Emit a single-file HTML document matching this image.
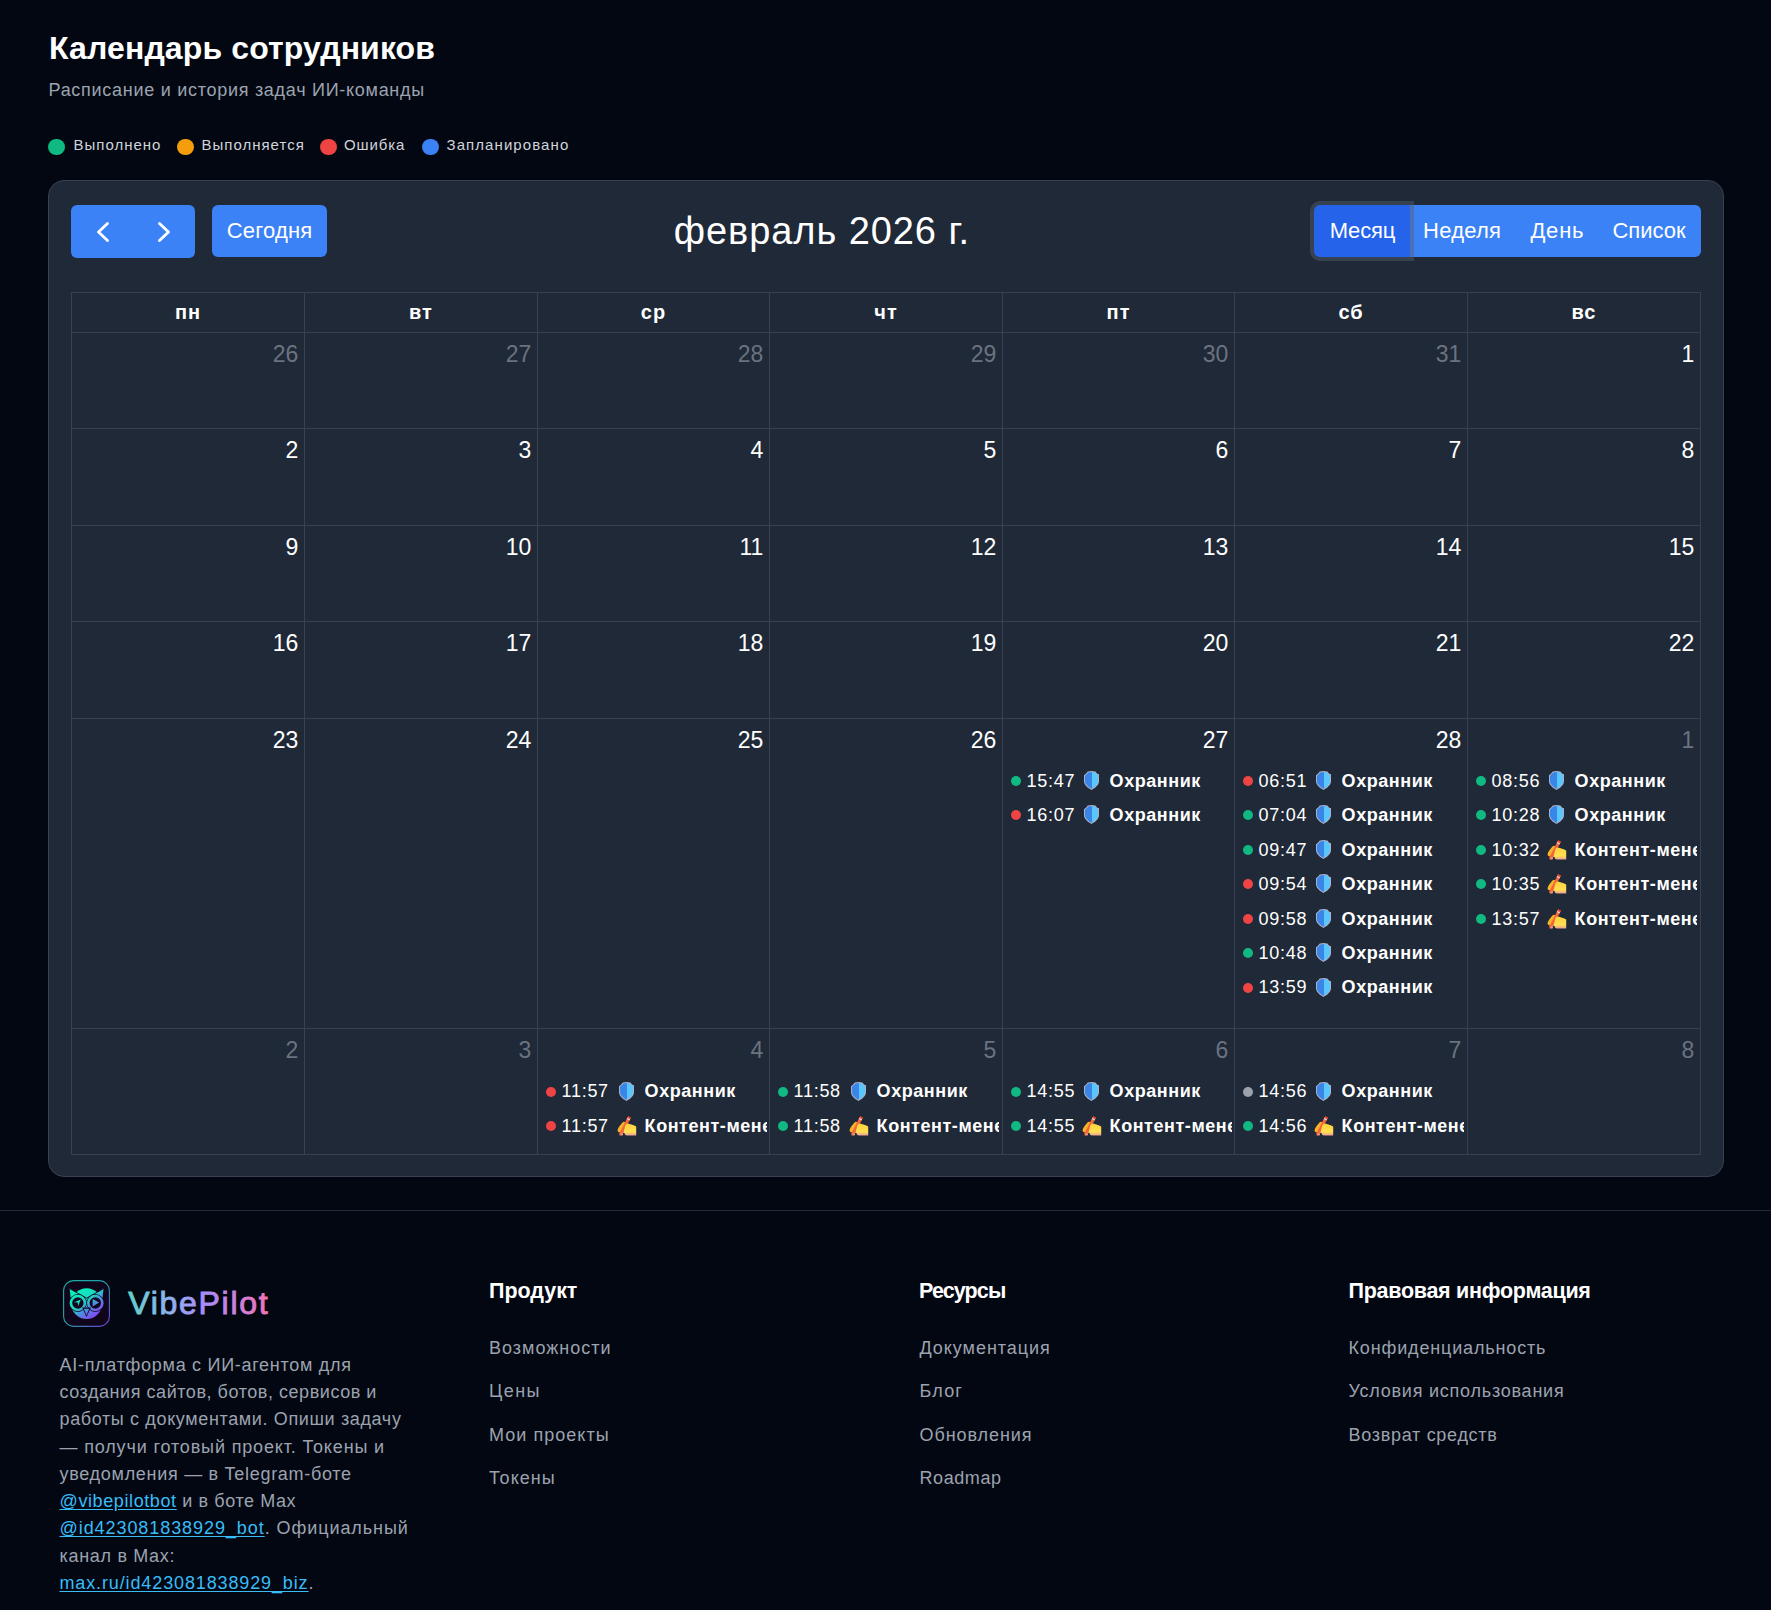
<!DOCTYPE html>
<html lang="ru"><head><meta charset="utf-8"><title>Календарь сотрудников</title>
<style>*{margin:0;padding:0;box-sizing:border-box}
html,body{width:1771px;height:1610px;overflow:hidden;background:#030712;font-family:"Liberation Sans", sans-serif;color:#fff}
.a{position:absolute}
.t{position:absolute;line-height:1;white-space:nowrap}
.ld{position:absolute;top:138.8px;width:16.6px;height:16.4px;border-radius:50%}
.card{position:absolute;left:48px;top:180px;width:1676px;height:997px;background:#1f2937;border:1px solid #374151;border-radius:16px}
.btn{position:absolute;background:#3b82f6;border-radius:6px}
.hl{position:absolute;height:1px;background:#374151}
.vl{position:absolute;width:1px;background:#374151}
.evc{position:absolute;overflow:hidden}
.dot{position:absolute;width:10px;height:10px;border-radius:50%}
.fline{position:absolute;left:0;top:1210px;width:1771px;height:1px;background:#1f2937}
a{color:#38bdf8;text-decoration:underline;text-underline-offset:2px}
</style></head>
<body>
<svg width="0" height="0" style="position:absolute">
<defs>
<linearGradient id="shg" gradientUnits="userSpaceOnUse" x1="0" y1="0" x2="15" y2="0"><stop offset="0.527" stop-color="#3a86e8"/><stop offset="0.527" stop-color="#59c6fc"/></linearGradient>
<linearGradient id="plm" x1="0" y1="0" x2="0" y2="1"><stop offset="0" stop-color="#fcd23c"/><stop offset="0.7" stop-color="#ffe052"/><stop offset="1" stop-color="#e99a9a"/></linearGradient>
<g id="shd">
<path d="M3.8 0.4 Q7.6 -0.3 11.4 0.4 L13.3 2.7 L15 3.3 L15 10 C15 13.8 11.6 16.9 7.5 18.9 C3.4 16.9 0 13.8 0 10 L0 4.2 L1.6 2.9 Z" fill="#a9b1cc"/>
<path d="M4.3 1.4 Q7.6 0.8 10.9 1.4 L12.6 3.5 L14 4.1 L14 10 C14 13.2 11.1 15.9 7.5 17.7 C3.9 15.9 1 13.2 1 10 L1 4.7 L2.3 3.6 Z" fill="url(#shg)"/>
</g>
<g id="hnd">
<path d="M0.6 14.8 C0.3 13.5 1.5 11.5 3 9.5 L5.5 6.5 C6.3 5.6 7.6 5.6 8.2 6.4 L8.6 8 L5.2 15.5 C4.2 17 1 16.8 0.6 14.8 Z" fill="#f7b42a"/>
<path d="M11.1 0.3 L13.9 1.8 L5.2 18.8 L2.5 19.6 L2.4 17.3 Z" fill="#f7653a"/>
<path d="M11.1 0.3 L13.9 1.8 L13.1 3.4 L10.3 1.9 Z" fill="#f24a2a"/>
<path d="M10.3 1.9 L13.1 3.4 L12.5 4.5 L9.7 3 Z" fill="#ded2f2"/>
<path d="M10 7.6 C12.5 7.8 16 9 19.2 10.5 L19.2 19.6 L10 19.6 C8.5 19.4 7.5 18.5 7.8 17.2 L6.2 17 L7.6 12.6 C8 10 8.6 8.2 10 7.6 Z" fill="url(#plm)"/>
<path d="M3 19.6 L4.4 17.2 L6.2 17.6 L5.6 19.6 Z" fill="#f19a8a"/>
</g>
</defs></svg><div class="t" style="left:49.00px;top:32.21px;font-size:32px;font-weight:700;letter-spacing:0.125px;">Календарь сотрудников</div>
<div class="t" style="left:48.50px;top:80.66px;font-size:18px;color:#9ca3af;letter-spacing:0.722px;">Расписание и история задач ИИ-команды</div>
<i class="ld" style="left:48px;background:#10b981"></i>
<div class="t" style="left:73.50px;top:136.90px;font-size:15px;color:#d1d5db;letter-spacing:1.000px;">Выполнено</div>
<i class="ld" style="left:177px;background:#f59e0b"></i>
<div class="t" style="left:201.50px;top:136.90px;font-size:15px;color:#d1d5db;letter-spacing:1.000px;">Выполняется</div>
<i class="ld" style="left:320px;background:#ef4444"></i>
<div class="t" style="left:344.00px;top:136.90px;font-size:15px;color:#d1d5db;letter-spacing:0.900px;">Ошибка</div>
<i class="ld" style="left:422px;background:#3b82f6"></i>
<div class="t" style="left:446.50px;top:136.90px;font-size:15px;color:#d1d5db;letter-spacing:1.083px;">Запланировано</div>
<div class="card"></div>
<div class="btn" style="left:71px;top:205px;width:124px;height:53px"></div>
<svg class="a" style="left:95px;top:220px" width="16" height="24" viewBox="0 0 16 24"><path d="M12.5 3.5 L3.5 12 L12.5 20.5" fill="none" stroke="#fff" stroke-width="2.8" stroke-linecap="round" stroke-linejoin="round"/></svg>
<svg class="a" style="left:156.2px;top:220px" width="16" height="24" viewBox="0 0 16 24"><path d="M3.5 3.5 L12.5 12 L3.5 20.5" fill="none" stroke="#fff" stroke-width="2.8" stroke-linecap="round" stroke-linejoin="round"/></svg>
<div class="btn" style="left:212px;top:205px;width:115px;height:52px"></div>
<div class="t" style="left:212.00px;top:220.38px;font-size:22px;letter-spacing:0.200px;width:115px;text-align:center;text-indent:0.200px;">Сегодня</div>
<div class="t" style="left:571.50px;top:211.93px;font-size:38px;letter-spacing:0.929px;width:500px;text-align:center;text-indent:0.929px;">февраль 2026 г.</div>
<div class="btn" style="left:1314px;top:205px;width:387px;height:52px"></div>
<div class="a" style="left:1310px;top:201px;width:104px;height:60px;background:#36424f;border-radius:10px 0 0 10px"></div>
<div class="btn" style="left:1314px;top:205px;width:96.3px;height:52px;background:#2563eb;border-radius:6px 0 0 6px"></div>
<div class="a" style="left:1410.3px;top:205px;width:3.9px;height:52px;background:#4a70b5"></div>
<div class="t" style="left:1314.00px;top:219.88px;font-size:22px;letter-spacing:-0.175px;width:97px;text-align:center;text-indent:-0.175px;">Месяц</div>
<div class="t" style="left:1414.00px;top:220.08px;font-size:22px;letter-spacing:0.240px;width:96px;text-align:center;text-indent:0.240px;">Неделя</div>
<div class="t" style="left:1511.00px;top:220.08px;font-size:22px;letter-spacing:0.800px;width:92px;text-align:center;text-indent:0.800px;">День</div>
<div class="t" style="left:1601.00px;top:220.08px;font-size:22px;width:96px;text-align:center;">Список</div>
<div class="hl" style="left:71px;top:292px;width:1630px"></div>
<div class="hl" style="left:71px;top:332px;width:1630px"></div>
<div class="hl" style="left:71px;top:428px;width:1630px"></div>
<div class="hl" style="left:71px;top:525px;width:1630px"></div>
<div class="hl" style="left:71px;top:621px;width:1630px"></div>
<div class="hl" style="left:71px;top:718px;width:1630px"></div>
<div class="hl" style="left:71px;top:1028px;width:1630px"></div>
<div class="hl" style="left:71px;top:1154px;width:1630px"></div>
<div class="vl" style="left:71px;top:292px;height:863px"></div>
<div class="vl" style="left:304px;top:292px;height:863px"></div>
<div class="vl" style="left:537px;top:292px;height:863px"></div>
<div class="vl" style="left:769px;top:292px;height:863px"></div>
<div class="vl" style="left:1002px;top:292px;height:863px"></div>
<div class="vl" style="left:1234px;top:292px;height:863px"></div>
<div class="vl" style="left:1467px;top:292px;height:863px"></div>
<div class="vl" style="left:1700px;top:292px;height:863px"></div>
<div class="t" style="left:127.50px;top:302.47px;font-size:20px;font-weight:700;letter-spacing:1.000px;width:120px;text-align:center;text-indent:1.000px;">пн</div>
<div class="t" style="left:360.50px;top:302.47px;font-size:20px;font-weight:700;letter-spacing:1.000px;width:120px;text-align:center;text-indent:1.000px;">вт</div>
<div class="t" style="left:593.00px;top:302.47px;font-size:20px;font-weight:700;letter-spacing:1.000px;width:120px;text-align:center;text-indent:1.000px;">ср</div>
<div class="t" style="left:825.50px;top:302.47px;font-size:20px;font-weight:700;letter-spacing:1.000px;width:120px;text-align:center;text-indent:1.000px;">чт</div>
<div class="t" style="left:1058.00px;top:302.47px;font-size:20px;font-weight:700;letter-spacing:1.000px;width:120px;text-align:center;text-indent:1.000px;">пт</div>
<div class="t" style="left:1290.50px;top:302.47px;font-size:20px;font-weight:700;letter-spacing:1.000px;width:120px;text-align:center;text-indent:1.000px;">сб</div>
<div class="t" style="left:1523.50px;top:302.47px;font-size:20px;font-weight:700;letter-spacing:1.000px;width:120px;text-align:center;text-indent:1.000px;">вс</div>
<div class="t" style="left:148.30px;top:343.13px;font-size:23px;color:#6b7280;width:150px;text-align:right;">26</div>
<div class="t" style="left:381.30px;top:343.13px;font-size:23px;color:#6b7280;width:150px;text-align:right;">27</div>
<div class="t" style="left:613.30px;top:343.13px;font-size:23px;color:#6b7280;width:150px;text-align:right;">28</div>
<div class="t" style="left:846.30px;top:343.13px;font-size:23px;color:#6b7280;width:150px;text-align:right;">29</div>
<div class="t" style="left:1078.30px;top:343.13px;font-size:23px;color:#6b7280;width:150px;text-align:right;">30</div>
<div class="t" style="left:1311.30px;top:343.13px;font-size:23px;color:#6b7280;width:150px;text-align:right;">31</div>
<div class="t" style="left:1544.30px;top:343.13px;font-size:23px;width:150px;text-align:right;">1</div>
<div class="t" style="left:148.30px;top:439.13px;font-size:23px;width:150px;text-align:right;">2</div>
<div class="t" style="left:381.30px;top:439.13px;font-size:23px;width:150px;text-align:right;">3</div>
<div class="t" style="left:613.30px;top:439.13px;font-size:23px;width:150px;text-align:right;">4</div>
<div class="t" style="left:846.30px;top:439.13px;font-size:23px;width:150px;text-align:right;">5</div>
<div class="t" style="left:1078.30px;top:439.13px;font-size:23px;width:150px;text-align:right;">6</div>
<div class="t" style="left:1311.30px;top:439.13px;font-size:23px;width:150px;text-align:right;">7</div>
<div class="t" style="left:1544.30px;top:439.13px;font-size:23px;width:150px;text-align:right;">8</div>
<div class="t" style="left:148.30px;top:536.13px;font-size:23px;width:150px;text-align:right;">9</div>
<div class="t" style="left:381.30px;top:536.13px;font-size:23px;width:150px;text-align:right;">10</div>
<div class="t" style="left:613.30px;top:536.13px;font-size:23px;width:150px;text-align:right;">11</div>
<div class="t" style="left:846.30px;top:536.13px;font-size:23px;width:150px;text-align:right;">12</div>
<div class="t" style="left:1078.30px;top:536.13px;font-size:23px;width:150px;text-align:right;">13</div>
<div class="t" style="left:1311.30px;top:536.13px;font-size:23px;width:150px;text-align:right;">14</div>
<div class="t" style="left:1544.30px;top:536.13px;font-size:23px;width:150px;text-align:right;">15</div>
<div class="t" style="left:148.30px;top:632.13px;font-size:23px;width:150px;text-align:right;">16</div>
<div class="t" style="left:381.30px;top:632.13px;font-size:23px;width:150px;text-align:right;">17</div>
<div class="t" style="left:613.30px;top:632.13px;font-size:23px;width:150px;text-align:right;">18</div>
<div class="t" style="left:846.30px;top:632.13px;font-size:23px;width:150px;text-align:right;">19</div>
<div class="t" style="left:1078.30px;top:632.13px;font-size:23px;width:150px;text-align:right;">20</div>
<div class="t" style="left:1311.30px;top:632.13px;font-size:23px;width:150px;text-align:right;">21</div>
<div class="t" style="left:1544.30px;top:632.13px;font-size:23px;width:150px;text-align:right;">22</div>
<div class="t" style="left:148.30px;top:729.13px;font-size:23px;width:150px;text-align:right;">23</div>
<div class="t" style="left:381.30px;top:729.13px;font-size:23px;width:150px;text-align:right;">24</div>
<div class="t" style="left:613.30px;top:729.13px;font-size:23px;width:150px;text-align:right;">25</div>
<div class="t" style="left:846.30px;top:729.13px;font-size:23px;width:150px;text-align:right;">26</div>
<div class="t" style="left:1078.30px;top:729.13px;font-size:23px;width:150px;text-align:right;">27</div>
<div class="evc" style="left:1003px;top:719px;width:229px;height:309px">
<i class="dot" style="left:8.00px;top:57.00px;background:#10b981"></i>
<div class="t" style="left:23.60px;top:52.76px;font-size:18px;letter-spacing:0.700px;">15:47</div>
<svg class="a" style="left:81.00px;top:52.00px" width="15" height="19" viewBox="0 0 15 19"><use href="#shd"/></svg>
<div class="t" style="left:106.60px;top:52.76px;font-size:18px;font-weight:700;letter-spacing:0.557px;">Охранник</div>
<i class="dot" style="left:8.00px;top:91.45px;background:#ef4444"></i>
<div class="t" style="left:23.60px;top:87.21px;font-size:18px;letter-spacing:0.700px;">16:07</div>
<svg class="a" style="left:81.00px;top:86.45px" width="15" height="19" viewBox="0 0 15 19"><use href="#shd"/></svg>
<div class="t" style="left:106.60px;top:87.21px;font-size:18px;font-weight:700;letter-spacing:0.557px;">Охранник</div>
</div>
<div class="t" style="left:1311.30px;top:729.13px;font-size:23px;width:150px;text-align:right;">28</div>
<div class="evc" style="left:1235px;top:719px;width:229px;height:309px">
<i class="dot" style="left:8.00px;top:57.00px;background:#ef4444"></i>
<div class="t" style="left:23.60px;top:52.76px;font-size:18px;letter-spacing:0.700px;">06:51</div>
<svg class="a" style="left:81.00px;top:52.00px" width="15" height="19" viewBox="0 0 15 19"><use href="#shd"/></svg>
<div class="t" style="left:106.60px;top:52.76px;font-size:18px;font-weight:700;letter-spacing:0.557px;">Охранник</div>
<i class="dot" style="left:8.00px;top:91.45px;background:#10b981"></i>
<div class="t" style="left:23.60px;top:87.21px;font-size:18px;letter-spacing:0.700px;">07:04</div>
<svg class="a" style="left:81.00px;top:86.45px" width="15" height="19" viewBox="0 0 15 19"><use href="#shd"/></svg>
<div class="t" style="left:106.60px;top:87.21px;font-size:18px;font-weight:700;letter-spacing:0.557px;">Охранник</div>
<i class="dot" style="left:8.00px;top:125.90px;background:#10b981"></i>
<div class="t" style="left:23.60px;top:121.66px;font-size:18px;letter-spacing:0.700px;">09:47</div>
<svg class="a" style="left:81.00px;top:120.90px" width="15" height="19" viewBox="0 0 15 19"><use href="#shd"/></svg>
<div class="t" style="left:106.60px;top:121.66px;font-size:18px;font-weight:700;letter-spacing:0.557px;">Охранник</div>
<i class="dot" style="left:8.00px;top:160.35px;background:#ef4444"></i>
<div class="t" style="left:23.60px;top:156.11px;font-size:18px;letter-spacing:0.700px;">09:54</div>
<svg class="a" style="left:81.00px;top:155.35px" width="15" height="19" viewBox="0 0 15 19"><use href="#shd"/></svg>
<div class="t" style="left:106.60px;top:156.11px;font-size:18px;font-weight:700;letter-spacing:0.557px;">Охранник</div>
<i class="dot" style="left:8.00px;top:194.80px;background:#ef4444"></i>
<div class="t" style="left:23.60px;top:190.56px;font-size:18px;letter-spacing:0.700px;">09:58</div>
<svg class="a" style="left:81.00px;top:189.80px" width="15" height="19" viewBox="0 0 15 19"><use href="#shd"/></svg>
<div class="t" style="left:106.60px;top:190.56px;font-size:18px;font-weight:700;letter-spacing:0.557px;">Охранник</div>
<i class="dot" style="left:8.00px;top:229.25px;background:#10b981"></i>
<div class="t" style="left:23.60px;top:225.01px;font-size:18px;letter-spacing:0.700px;">10:48</div>
<svg class="a" style="left:81.00px;top:224.25px" width="15" height="19" viewBox="0 0 15 19"><use href="#shd"/></svg>
<div class="t" style="left:106.60px;top:225.01px;font-size:18px;font-weight:700;letter-spacing:0.557px;">Охранник</div>
<i class="dot" style="left:8.00px;top:263.70px;background:#ef4444"></i>
<div class="t" style="left:23.60px;top:259.46px;font-size:18px;letter-spacing:0.700px;">13:59</div>
<svg class="a" style="left:81.00px;top:258.70px" width="15" height="19" viewBox="0 0 15 19"><use href="#shd"/></svg>
<div class="t" style="left:106.60px;top:259.46px;font-size:18px;font-weight:700;letter-spacing:0.557px;">Охранник</div>
</div>
<div class="t" style="left:1544.30px;top:729.13px;font-size:23px;color:#6b7280;width:150px;text-align:right;">1</div>
<div class="evc" style="left:1468px;top:719px;width:229px;height:309px">
<i class="dot" style="left:8.00px;top:57.00px;background:#10b981"></i>
<div class="t" style="left:23.60px;top:52.76px;font-size:18px;letter-spacing:0.700px;">08:56</div>
<svg class="a" style="left:81.00px;top:52.00px" width="15" height="19" viewBox="0 0 15 19"><use href="#shd"/></svg>
<div class="t" style="left:106.60px;top:52.76px;font-size:18px;font-weight:700;letter-spacing:0.557px;">Охранник</div>
<i class="dot" style="left:8.00px;top:91.45px;background:#10b981"></i>
<div class="t" style="left:23.60px;top:87.21px;font-size:18px;letter-spacing:0.700px;">10:28</div>
<svg class="a" style="left:81.00px;top:86.45px" width="15" height="19" viewBox="0 0 15 19"><use href="#shd"/></svg>
<div class="t" style="left:106.60px;top:87.21px;font-size:18px;font-weight:700;letter-spacing:0.557px;">Охранник</div>
<i class="dot" style="left:8.00px;top:125.90px;background:#10b981"></i>
<div class="t" style="left:23.60px;top:121.66px;font-size:18px;letter-spacing:0.700px;">10:32</div>
<svg class="a" style="left:79.30px;top:120.60px" width="20" height="20" viewBox="0 0 20 20"><use href="#hnd"/></svg>
<div class="t" style="left:106.60px;top:121.66px;font-size:18px;font-weight:700;letter-spacing:0.557px;">Контент-менеджер</div>
<i class="dot" style="left:8.00px;top:160.35px;background:#10b981"></i>
<div class="t" style="left:23.60px;top:156.11px;font-size:18px;letter-spacing:0.700px;">10:35</div>
<svg class="a" style="left:79.30px;top:155.05px" width="20" height="20" viewBox="0 0 20 20"><use href="#hnd"/></svg>
<div class="t" style="left:106.60px;top:156.11px;font-size:18px;font-weight:700;letter-spacing:0.557px;">Контент-менеджер</div>
<i class="dot" style="left:8.00px;top:194.80px;background:#10b981"></i>
<div class="t" style="left:23.60px;top:190.56px;font-size:18px;letter-spacing:0.700px;">13:57</div>
<svg class="a" style="left:79.30px;top:189.50px" width="20" height="20" viewBox="0 0 20 20"><use href="#hnd"/></svg>
<div class="t" style="left:106.60px;top:190.56px;font-size:18px;font-weight:700;letter-spacing:0.557px;">Контент-менеджер</div>
</div>
<div class="t" style="left:148.30px;top:1039.13px;font-size:23px;color:#6b7280;width:150px;text-align:right;">2</div>
<div class="t" style="left:381.30px;top:1039.13px;font-size:23px;color:#6b7280;width:150px;text-align:right;">3</div>
<div class="t" style="left:613.30px;top:1039.13px;font-size:23px;color:#6b7280;width:150px;text-align:right;">4</div>
<div class="evc" style="left:538px;top:1029px;width:229px;height:125px">
<i class="dot" style="left:8.00px;top:57.70px;background:#ef4444"></i>
<div class="t" style="left:23.60px;top:53.46px;font-size:18px;letter-spacing:0.700px;">11:57</div>
<svg class="a" style="left:81.00px;top:52.70px" width="15" height="19" viewBox="0 0 15 19"><use href="#shd"/></svg>
<div class="t" style="left:106.60px;top:53.46px;font-size:18px;font-weight:700;letter-spacing:0.557px;">Охранник</div>
<i class="dot" style="left:8.00px;top:92.15px;background:#ef4444"></i>
<div class="t" style="left:23.60px;top:87.91px;font-size:18px;letter-spacing:0.700px;">11:57</div>
<svg class="a" style="left:79.30px;top:86.85px" width="20" height="20" viewBox="0 0 20 20"><use href="#hnd"/></svg>
<div class="t" style="left:106.60px;top:87.91px;font-size:18px;font-weight:700;letter-spacing:0.557px;">Контент-менеджер</div>
</div>
<div class="t" style="left:846.30px;top:1039.13px;font-size:23px;color:#6b7280;width:150px;text-align:right;">5</div>
<div class="evc" style="left:770px;top:1029px;width:229px;height:125px">
<i class="dot" style="left:8.00px;top:57.70px;background:#10b981"></i>
<div class="t" style="left:23.60px;top:53.46px;font-size:18px;letter-spacing:0.700px;">11:58</div>
<svg class="a" style="left:81.00px;top:52.70px" width="15" height="19" viewBox="0 0 15 19"><use href="#shd"/></svg>
<div class="t" style="left:106.60px;top:53.46px;font-size:18px;font-weight:700;letter-spacing:0.557px;">Охранник</div>
<i class="dot" style="left:8.00px;top:92.15px;background:#10b981"></i>
<div class="t" style="left:23.60px;top:87.91px;font-size:18px;letter-spacing:0.700px;">11:58</div>
<svg class="a" style="left:79.30px;top:86.85px" width="20" height="20" viewBox="0 0 20 20"><use href="#hnd"/></svg>
<div class="t" style="left:106.60px;top:87.91px;font-size:18px;font-weight:700;letter-spacing:0.557px;">Контент-менеджер</div>
</div>
<div class="t" style="left:1078.30px;top:1039.13px;font-size:23px;color:#6b7280;width:150px;text-align:right;">6</div>
<div class="evc" style="left:1003px;top:1029px;width:229px;height:125px">
<i class="dot" style="left:8.00px;top:57.70px;background:#10b981"></i>
<div class="t" style="left:23.60px;top:53.46px;font-size:18px;letter-spacing:0.700px;">14:55</div>
<svg class="a" style="left:81.00px;top:52.70px" width="15" height="19" viewBox="0 0 15 19"><use href="#shd"/></svg>
<div class="t" style="left:106.60px;top:53.46px;font-size:18px;font-weight:700;letter-spacing:0.557px;">Охранник</div>
<i class="dot" style="left:8.00px;top:92.15px;background:#10b981"></i>
<div class="t" style="left:23.60px;top:87.91px;font-size:18px;letter-spacing:0.700px;">14:55</div>
<svg class="a" style="left:79.30px;top:86.85px" width="20" height="20" viewBox="0 0 20 20"><use href="#hnd"/></svg>
<div class="t" style="left:106.60px;top:87.91px;font-size:18px;font-weight:700;letter-spacing:0.557px;">Контент-менеджер</div>
</div>
<div class="t" style="left:1311.30px;top:1039.13px;font-size:23px;color:#6b7280;width:150px;text-align:right;">7</div>
<div class="evc" style="left:1235px;top:1029px;width:229px;height:125px">
<i class="dot" style="left:8.00px;top:57.70px;background:#9ca3af"></i>
<div class="t" style="left:23.60px;top:53.46px;font-size:18px;letter-spacing:0.700px;">14:56</div>
<svg class="a" style="left:81.00px;top:52.70px" width="15" height="19" viewBox="0 0 15 19"><use href="#shd"/></svg>
<div class="t" style="left:106.60px;top:53.46px;font-size:18px;font-weight:700;letter-spacing:0.557px;">Охранник</div>
<i class="dot" style="left:8.00px;top:92.15px;background:#10b981"></i>
<div class="t" style="left:23.60px;top:87.91px;font-size:18px;letter-spacing:0.700px;">14:56</div>
<svg class="a" style="left:79.30px;top:86.85px" width="20" height="20" viewBox="0 0 20 20"><use href="#hnd"/></svg>
<div class="t" style="left:106.60px;top:87.91px;font-size:18px;font-weight:700;letter-spacing:0.557px;">Контент-менеджер</div>
</div>
<div class="t" style="left:1544.30px;top:1039.13px;font-size:23px;color:#6b7280;width:150px;text-align:right;">8</div>
<div class="fline"></div>
<svg class="a" style="left:63px;top:1280px" width="47" height="47" viewBox="0 0 47 47">
<defs>
<linearGradient id="bd" gradientUnits="userSpaceOnUse" x1="0" y1="0" x2="47" y2="47"><stop offset="0" stop-color="#16b5a2"/><stop offset="0.55" stop-color="#2596ae"/><stop offset="1" stop-color="#7a35d8"/></linearGradient>
<linearGradient id="fc" gradientUnits="userSpaceOnUse" x1="12" y1="9" x2="34" y2="39"><stop offset="0" stop-color="#04f2bd"/><stop offset="0.38" stop-color="#18dcc0"/><stop offset="0.7" stop-color="#5f78e8"/><stop offset="1" stop-color="#9036f6"/></linearGradient>
</defs>
<rect x="0.6" y="0.6" width="45.8" height="45.8" rx="10" fill="#10061c" stroke="url(#bd)" stroke-width="1.1"/>
<g fill="url(#fc)">
<circle cx="23.6" cy="23.7" r="15.4"/>
<path d="M6.6 8.6 L23.6 18.2 L14.9 23 L7.6 18 Q7.2 12.5 6.6 8.6 Z"/>
<path d="M40.6 8.6 L23.6 18.2 L32.3 23 L39.6 18 Q40 12.5 40.6 8.6 Z"/>
</g>
<path d="M6.6 8.6 L23.6 18.2 L40.6 8.6" fill="none" stroke="#12071f" stroke-width="0.9"/>
<circle cx="14.9" cy="23" r="8.9" fill="#12071f"/>
<circle cx="32.3" cy="23" r="8.9" fill="#12071f"/>
<circle cx="14.9" cy="23" r="7" fill="none" stroke="url(#fc)" stroke-width="2.6"/>
<circle cx="32.3" cy="23" r="7" fill="none" stroke="url(#fc)" stroke-width="2.6"/>
<path d="M11.2 22.3 L17.8 19.4 L15.2 25.9 L14.6 22.6 Z" fill="url(#fc)"/>
<path d="M29.6 19 L29.6 26.4 L36.2 22.6 Z" fill="url(#fc)"/>
<path d="M19.2 27.6 L27.9 27.6 L23.5 37 Z" fill="#12071f"/>
<path d="M20.7 28.8 L26.3 28.8 L23.5 35.2 Z" fill="url(#fc)"/>
</svg>
<svg class="a" style="left:120px;top:1280px" width="170" height="45" viewBox="0 0 170 45"><defs><linearGradient id="lg" gradientUnits="userSpaceOnUse" x1="7" y1="0" x2="149" y2="0"><stop offset="0" stop-color="#5ed3c6"/><stop offset="0.3" stop-color="#8fb2ee"/><stop offset="0.55" stop-color="#a98bfa"/><stop offset="0.8" stop-color="#d17fd6"/><stop offset="1" stop-color="#f472b6"/></linearGradient></defs><text x="8.2" y="34.3" font-family="Liberation Sans" font-size="32" letter-spacing="1.712" fill="url(#lg)" stroke="url(#lg)" stroke-width="0.9">VibePilot</text></svg>
<div class="t" style="left:59.50px;top:1355.76px;font-size:18px;color:#9ca3af;letter-spacing:0.711px;">AI-платформа с ИИ-агентом для</div>
<div class="t" style="left:59.50px;top:1383.01px;font-size:18px;color:#9ca3af;letter-spacing:0.548px;">создания сайтов, ботов, сервисов и</div>
<div class="t" style="left:59.50px;top:1410.26px;font-size:18px;color:#9ca3af;letter-spacing:0.636px;">работы с документами. Опиши задачу</div>
<div class="t" style="left:59.50px;top:1437.51px;font-size:18px;color:#9ca3af;letter-spacing:0.850px;">— получи готовый проект. Токены и</div>
<div class="t" style="left:59.50px;top:1464.76px;font-size:18px;color:#9ca3af;letter-spacing:0.711px;">уведомления — в Telegram-боте</div>
<div class="t" style="left:59.50px;top:1492.01px;font-size:18px;color:#9ca3af;letter-spacing:0.604px;"><a>@vibepilotbot</a> и в боте Max</div>
<div class="t" style="left:59.50px;top:1519.26px;font-size:18px;color:#9ca3af;letter-spacing:0.931px;"><a>@id423081838929_bot</a>. Официальный</div>
<div class="t" style="left:59.50px;top:1546.51px;font-size:18px;color:#9ca3af;letter-spacing:0.691px;">канал в Max:</div>
<div class="t" style="left:59.50px;top:1573.76px;font-size:18px;color:#9ca3af;letter-spacing:0.872px;"><a>max.ru/id423081838929_biz</a>.</div>
<div class="t" style="left:489.00px;top:1281.00px;font-size:21.5px;font-weight:700;letter-spacing:-0.033px;">Продукт</div>
<div class="t" style="left:919.00px;top:1281.00px;font-size:21.5px;font-weight:700;letter-spacing:-0.883px;">Ресурсы</div>
<div class="t" style="left:1348.50px;top:1281.00px;font-size:21.5px;font-weight:700;letter-spacing:-0.272px;">Правовая информация</div>
<div class="t" style="left:489.00px;top:1338.76px;font-size:18px;color:#9ca3af;letter-spacing:1.000px;">Возможности</div>
<div class="t" style="left:489.00px;top:1381.86px;font-size:18px;color:#9ca3af;letter-spacing:1.433px;">Цены</div>
<div class="t" style="left:489.00px;top:1425.86px;font-size:18px;color:#9ca3af;letter-spacing:1.040px;">Мои проекты</div>
<div class="t" style="left:489.00px;top:1468.96px;font-size:18px;color:#9ca3af;letter-spacing:1.020px;">Токены</div>
<div class="t" style="left:919.50px;top:1338.76px;font-size:18px;color:#9ca3af;letter-spacing:0.955px;">Документация</div>
<div class="t" style="left:919.50px;top:1381.86px;font-size:18px;color:#9ca3af;letter-spacing:1.167px;">Блог</div>
<div class="t" style="left:919.50px;top:1425.86px;font-size:18px;color:#9ca3af;letter-spacing:0.922px;">Обновления</div>
<div class="t" style="left:919.50px;top:1468.96px;font-size:18px;color:#9ca3af;letter-spacing:0.583px;">Roadmap</div>
<div class="t" style="left:1348.50px;top:1338.76px;font-size:18px;color:#9ca3af;letter-spacing:0.847px;">Конфиденциальность</div>
<div class="t" style="left:1348.50px;top:1381.86px;font-size:18px;color:#9ca3af;letter-spacing:0.770px;">Условия использования</div>
<div class="t" style="left:1348.50px;top:1425.86px;font-size:18px;color:#9ca3af;letter-spacing:0.707px;">Возврат средств</div>
</body></html>
